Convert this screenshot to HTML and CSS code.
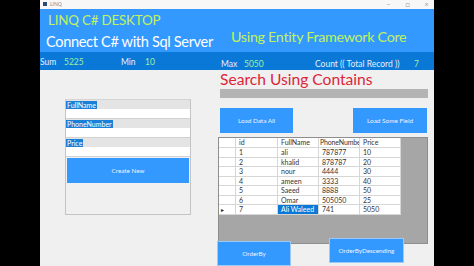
FILE: index.html
```html
<!DOCTYPE html>
<html>
<head>
<meta charset="utf-8">
<title>LINQ</title>
<link rel="stylesheet" href="styles.css">
</head>
<body>
<div class="window">
  <div class="titlebar">
    <span class="app-icon"></span><span class="app-name">LINQ</span>
    <div class="controls"><span class="ctl">&#8211;</span><span class="ctl">&#9633;</span><span class="ctl">&#215;</span></div>
  </div>
  <header class="header">
    <div class="header-left">
      <div class="brand">LINQ C# DESKTOP</div>
      <div class="subtitle">Connect C# with Sql Server</div>
    </div>
    <div class="header-right">Using Entity Framework Core</div>
  </header>
  <div class="stats">
    <span class="k">Sum</span><span class="v">5225</span>
    <span class="k">Min</span><span class="v">10</span>
    <span class="k low">Max</span><span class="v low">5050</span>
    <span class="k low">Count (( Total Record ))</span><span class="v low">7</span>
  </div>
  <main class="content">
    <section class="form-panel">
      <div class="field">
        <div class="label-row"><span class="label">FullName</span></div>
        <div class="input"></div>
      </div>
      <div class="field">
        <div class="label-row"><span class="label">PhoneNumber</span></div>
        <div class="input"></div>
      </div>
      <div class="field">
        <div class="label-row"><span class="label">Price</span></div>
        <div class="input"></div>
      </div>
      <button class="btn create">Create New</button>
    </section>
    <section class="right">
      <h1 class="search-title">Search Using Contains</h1>
      <div class="search-bar"></div>
      <div class="load-row">
        <button class="btn load">Load Data All</button>
        <button class="btn load">Load Some Field</button>
      </div>
      <div class="grid-box">
        <div class="grid">
          <div class="c rh"></div><div class="c">id</div><div class="c">FullName</div><div class="c tight">PhoneNumbe</div><div class="c">Price</div>
          <div class="c rh"></div><div class="c">1</div><div class="c">ali</div><div class="c">787877</div><div class="c">10</div>
          <div class="c rh"></div><div class="c">2</div><div class="c">khalid</div><div class="c">878787</div><div class="c">20</div>
          <div class="c rh"></div><div class="c">3</div><div class="c">nour</div><div class="c">4444</div><div class="c">30</div>
          <div class="c rh"></div><div class="c">4</div><div class="c">ameen</div><div class="c">3333</div><div class="c">40</div>
          <div class="c rh"></div><div class="c">5</div><div class="c">Saeed</div><div class="c">8888</div><div class="c">50</div>
          <div class="c rh"></div><div class="c">6</div><div class="c">Omar</div><div class="c">505050</div><div class="c">25</div>
          <div class="c rh cur">&#9656;</div><div class="c">7</div><div class="c sel">Ali Waleed</div><div class="c">741</div><div class="c">5050</div>
        </div>
      </div>
      <div class="order-row">
        <button class="btn order asc">OrderBy</button>
        <button class="btn order desc">OrderByDescending</button>
      </div>
    </section>
  </main>
</div>
</body>
</html>
```

FILE: styles.css
```css
* { box-sizing: border-box; }
html, body { margin: 0; padding: 0; }
body {
  background: #000;
  width: 474px;
  height: 266px;
  overflow: hidden;
  font-family: Lato, "Open Sans", sans-serif;
}
.window {
  margin-left: 40px;
  width: 394px;
  height: 266px;
  display: flex;
  flex-direction: column;
  background: #f0f0f0;
  overflow: hidden;
}
.titlebar {
  height: 10px;
  background: #f7f7f7;
  display: flex;
  align-items: center;
  padding-left: 3px;
  font-size: 5px;
  color: #8a8a8a;
}
.app-icon {
  width: 4px;
  height: 4px;
  background: #2a4a7a;
  margin-right: 3px;
}
.app-name { line-height: 6px; }
.controls {
  margin-left: auto;
  display: flex;
  gap: 12px;
  padding-right: 4px;
  font-size: 7px;
  color: #9a9a9a;
}
.ctl { width: 7px; text-align: center; line-height: 8px; }

.header {
  height: 49px;
  background: #3399ff;
  display: flex;
}
.header-left {
  width: 191px;
  padding-left: 6px;
  padding-top: 3px;
}
.brand {
  margin-left: 2px;
  font-size: 13.4px;
  letter-spacing: -0.2px;
  line-height: 16px;
  color: #c2f25c;
  white-space: nowrap;
}
.subtitle {
  margin-top: 5px;
  font-size: 14.6px;
  letter-spacing: -0.35px;
  line-height: 18px;
  color: #ffffff;
  white-space: nowrap;
}
.header-right {
  padding-top: 19px;
  font-size: 14.3px;
  letter-spacing: -0.3px;
  line-height: 18px;
  color: #c2f25c;
  white-space: nowrap;
}

.stats {
  height: 19px;
  background: #0a78d7;
  display: grid;
  grid-template-columns: 24px 57px 24px 76px 23px 71px 99px auto;
  align-items: start;
  padding-top: 5px;
  font-size: 8.5px;
  line-height: 11px;
  white-space: nowrap;
}
.stats .k { color: #e6f0ff; }
.stats .v { color: #9ef09e; }
.stats .low { margin-top: 2px; }

.content {
  flex: 1;
  display: flex;
  padding-left: 25px;
}
.form-panel {
  width: 126px;
  height: 116px;
  margin-top: 29px;
  border: 1px solid #c4c4c4;
  border-top-color: #d4d4d4;
  display: flex;
  flex-direction: column;
}
.field {
  border-bottom: 1px solid #d2d2d2;
}
.label-row {
  height: 9px;
  background: #e4e4e4;
  display: flex;
  align-items: center;
}
.label {
  background: #1a7fd6;
  color: #fff;
  font-size: 7px;
  line-height: 8px;
  padding: 0 1px;
  white-space: nowrap;
}
.input {
  height: 9px;
  background: #fff;
}
.btn {
  border: 0;
  background: #3399ff;
  color: #eaf3ff;
  font-family: Lato, "Open Sans", sans-serif;
  padding: 0;
  white-space: nowrap;
}
.create {
  margin: 1px 1px 0 1px;
  height: 25px;
  font-size: 6.3px;
}

.right {
  width: 210px;
  margin-left: 27px;
  display: flex;
  flex-direction: column;
}
.search-title {
  margin: 0 0 0 2px;
  font-weight: normal;
  font-size: 15.6px;
  line-height: 18px;
  color: #dc2638;
  white-space: nowrap;
}
.search-bar {
  margin: 1px 0 0 2px;
  width: 208px;
  height: 9px;
  background: #b4b4b4;
}
.load-row {
  margin-top: 10px;
  display: flex;
  justify-content: space-between;
  padding: 0 1px 0 2px;
}
.load {
  width: 73px;
  height: 25px;
  font-size: 6.4px;
}
.load + .load { width: 74px; }

.grid-box {
  margin-top: 4px;
  height: 107px;
  background: #a6a6a6;
  border: 1px solid #8e8e8e;
}
.grid {
  width: 182px;
  display: grid;
  grid-template-columns: 17px 42px 41px 41px 41px;
  grid-template-rows: 10px repeat(7, 9.57px);
  background: #fff;
  font-size: 7px;
  color: #333;
}
.c {
  border-right: 1px solid #d6d6d6;
  border-bottom: 1px solid #d6d6d6;
  padding-left: 3px;
  line-height: 9px;
  white-space: nowrap;
  overflow: hidden;
}
.tight { padding-left: 1px; letter-spacing: -0.15px; }
.rh { padding-left: 2px; }
.cur { color: #222; font-size: 6px; }
.sel { background: #0a78d7; color: #fff; }

.order-row {
  margin-top: -6px;
  margin-left: -1px;
  display: flex;
  align-items: flex-start;
  gap: 38px;
}
.order {
  height: 25px;
  font-size: 6.3px;
  border: 1px solid #9ccaf6;
}
.asc { width: 74px; margin-top: 3px; }
.desc { width: 75px; }
```
